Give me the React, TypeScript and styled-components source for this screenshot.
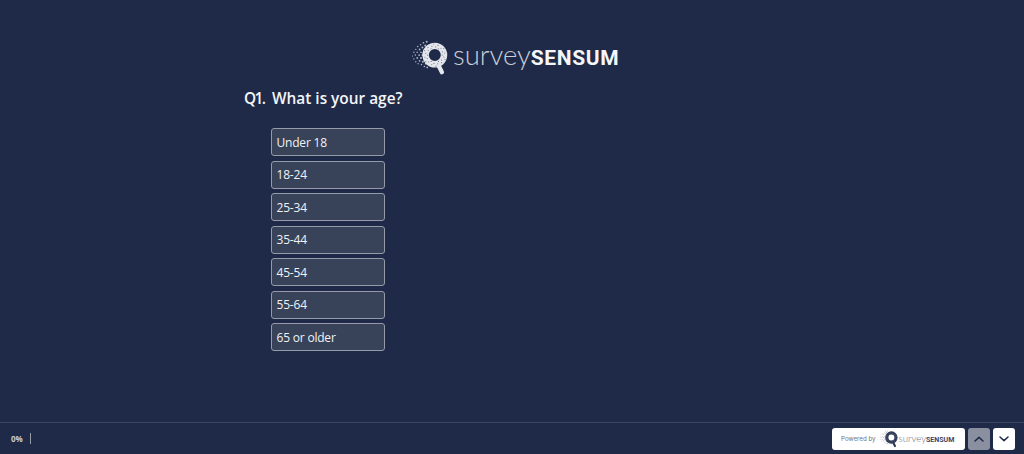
import React from 'react';
import styled, { createGlobalStyle } from 'styled-components';

const AGE_OPTIONS = ['Under 18', '18-24', '25-34', '35-44', '45-54', '55-64', '65 or older'];

// scattered dust on the left of the logo ring
const DUST: [number, number, number][] = [
	[0.5, 19, 0.6], [2, 15, 0.7], [2, 22, 0.7], [3.5, 18, 0.8], [4, 12, 0.7], [4, 25, 0.7], [5.5, 15, 0.8],
	[5.5, 21, 0.9], [6, 9, 0.8], [6.5, 27, 0.7], [7.5, 18, 0.9], [8, 12, 0.9], [8, 24, 0.9], [9, 7, 0.8],
	[9.5, 15, 0.9], [9.5, 21, 1], [10, 28, 0.8], [11, 10, 1], [11, 18, 1], [11.5, 25, 1], [12, 5, 0.9],
	[12.5, 13, 1], [12.5, 21, 1], [13, 30, 0.8], [14, 8, 1.1], [14.5, 27, 1], [15.5, 4, 1], [16, 31, 0.9],
];

// dark flecks over the ring, evenly round it with a little jitter
const FLECKS = Array.from({ length: 30 }, (_, i) => {
	const angle = (i / 30) * Math.PI * 2;
	const radius = 9.7 + ((i * 7) % 5) - 2;
	return [24 + Math.cos(angle) * radius, 18 + Math.sin(angle) * radius];
});

const LogoMark = ({ size, ring, dust, fleck }: { size: number; ring: string; dust: string; fleck: string }) => (
	<svg
		width={size}
		height={size}
		viewBox='0 0 40 40'
		fill='none'
	>
		{DUST.map(([x, y, r], i) => (
			<circle
				key={i}
				cx={x}
				cy={y}
				r={r}
				fill={dust}
			/>
		))}
		<circle
			cx='24'
			cy='18'
			r='9.7'
			stroke={ring}
			strokeWidth='6.8'
		/>
		<path
			d='M28 29l3.5 7'
			stroke={ring}
			strokeWidth='4.5'
			strokeLinecap='round'
		/>
		{FLECKS.map(([x, y], i) => (
			<circle
				key={i}
				cx={x}
				cy={y}
				r='0.6'
				fill={fleck}
			/>
		))}
	</svg>
);

const Chevron = ({ up }: { up?: boolean }) => (
	<svg
		width='10'
		height='6'
		viewBox='0 0 10 6'
		fill='none'
	>
		<path
			d={up ? 'M1 5l4-3.6L9 5' : 'M1 1l4 3.6L9 1'}
			stroke='#1e2a48'
			strokeWidth='1.5'
			strokeLinecap='round'
			strokeLinejoin='round'
		/>
	</svg>
);

export default function App() {
	return (
		<Page>
			<GlobalStyle />
			<Main>
				<LogoRow>
					<LogoMark
						size={38}
						ring='#e4e7ec'
						dust='#b4bac7'
						fleck='#6d7690'
					/>
					<LogoText>
						survey<strong>SENSUM</strong>
					</LogoText>
				</LogoRow>
				<Question>
					<QuestionNumber>Q1.</QuestionNumber>
					<QuestionText>What is your age?</QuestionText>
				</Question>
				<Options>
					{AGE_OPTIONS.map((option) => (
						<OptionButton key={option}>{option}</OptionButton>
					))}
				</Options>
			</Main>
			<Footer>
				<Progress>
					<ProgressLabel>0%</ProgressLabel>
					<ProgressTick />
				</Progress>
				<FooterActions>
					<PoweredBy>
						<PoweredLabel>Powered by</PoweredLabel>
						<LogoMark
							size={19}
							ring='#2f3a55'
							dust='#8b93a5'
							fleck='#8b93a5'
						/>
						<PoweredLogoText>
							survey<strong>SENSUM</strong>
						</PoweredLogoText>
					</PoweredBy>
					<NavButton $disabled>
						<Chevron up />
					</NavButton>
					<NavButton>
						<Chevron />
					</NavButton>
				</FooterActions>
			</Footer>
		</Page>
	);
}

const GlobalStyle = createGlobalStyle`
	html, body {
		margin: 0;
		padding: 0;
		background: #1e2a48;
	}
	* {
		box-sizing: border-box;
	}
`;

const Page = styled.div`
	display: flex;
	flex-direction: column;
	height: 100vh;
	overflow: hidden;
	background: #1e2a48;
	color: #fff;
	font-family: 'Open Sans', 'Noto Sans', sans-serif;
`;

const Main = styled.main`
	flex: 1;
	display: flex;
	flex-direction: column;
	padding: 38px 0 0 244px;
`;

const LogoRow = styled.div`
	display: flex;
	align-items: center;
	gap: 3px;
	height: 38px;
	margin-left: 168px;
`;

const LogoText = styled.span`
	padding-bottom: 5px;
	font-family: 'Lato', sans-serif;
	font-size: 27.5px;
	font-weight: 300;
	color: #c9cdd7;
	line-height: 1;
	white-space: nowrap;
	strong {
		font-family: 'Roboto', sans-serif;
		font-size: 21px;
		font-weight: 700;
		letter-spacing: 0.6px;
		color: #f5f6f8;
	}
`;

const Question = styled.div`
	display: flex;
	align-items: center;
	height: 24px;
	margin-top: 10px;
	font-size: 15.4px;
	font-weight: 600;
	color: #f4f5f7;
`;

const QuestionNumber = styled.span`
	width: 28px;
	letter-spacing: -1.6px;
`;

const QuestionText = styled.span``;

const Options = styled.div`
	display: flex;
	flex-direction: column;
	gap: 4.5px;
	width: 114px;
	margin: 18px 0 0 27px;
`;

const OptionButton = styled.button`
	height: 28px;
	padding: 0 4.5px;
	border: 1.5px solid #959baa;
	border-radius: 3px;
	background: #384259;
	color: #f1f2f5;
	font-family: inherit;
	font-size: 12px;
	letter-spacing: -0.2px;
	text-align: left;
`;

const Footer = styled.footer`
	display: flex;
	align-items: center;
	justify-content: space-between;
	height: 32px;
	padding: 0 9px 0 11px;
	border-top: 1px solid #3a4560;
`;

const Progress = styled.div`
	display: flex;
	align-items: center;
	gap: 7px;
`;

const ProgressLabel = styled.span`
	font-size: 8px;
	font-weight: 700;
	color: #c9cdd7;
`;

const ProgressTick = styled.span`
	width: 1px;
	height: 11px;
	background: #949aa8;
`;

const FooterActions = styled.div`
	display: flex;
	align-items: center;
	gap: 3px;
`;

const PoweredBy = styled.div`
	display: flex;
	align-items: center;
	width: 133px;
	height: 22px;
	padding-left: 9px;
	border-radius: 3px;
	background: #fff;
`;

const PoweredLabel = styled.span`
	margin-right: 4px;
	font-family: 'Inter', sans-serif;
	font-size: 6.2px;
	color: #6d7484;
	white-space: nowrap;
`;

const PoweredLogoText = styled.span`
	font-family: 'Lato', sans-serif;
	font-size: 9.7px;
	font-weight: 300;
	color: #6d7484;
	line-height: 1;
	white-space: nowrap;
	strong {
		font-family: 'Roboto', sans-serif;
		font-size: 7px;
		font-weight: 700;
		color: #3a4560;
	}
`;

const NavButton = styled.div<{ $disabled?: boolean }>`
	display: flex;
	align-items: center;
	justify-content: center;
	width: 22px;
	height: 22px;
	border-radius: 3px;
	background: ${({ $disabled }) => ($disabled ? '#8a90a0' : '#fff')};
`;
